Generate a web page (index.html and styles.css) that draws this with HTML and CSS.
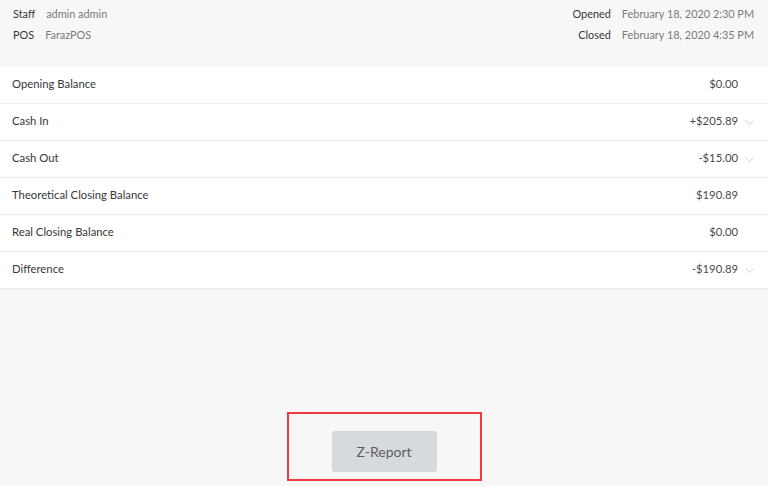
FILE: index.html
```html
<!DOCTYPE html>
<html>
<head>
<meta charset="utf-8">
<link rel="stylesheet" href="styles.css">
</head>
<body>
<div class="page">
  <header class="info">
    <div class="info-col">
      <div class="info-row"><span class="lbl">Staff</span><span class="val">admin admin</span></div>
      <div class="info-row"><span class="lbl">POS</span><span class="val">FarazPOS</span></div>
    </div>
    <div class="info-col right">
      <div class="info-row"><span class="lbl">Opened</span><span class="val">February 18, 2020 2:30 PM</span></div>
      <div class="info-row"><span class="lbl">Closed</span><span class="val">February 18, 2020 4:35 PM</span></div>
    </div>
  </header>
  <section class="list">
    <div class="row"><span class="name">Opening Balance</span><span class="amt">$0.00</span><span class="chev"></span></div>
    <div class="row"><span class="name">Cash In</span><span class="amt">+$205.89</span><span class="chev"><svg width="9" height="5" viewBox="0 0 9 5"><path d="M0.5 0.5 L4.5 4.5 L8.5 0.5" fill="none" stroke="#d2d2d2" stroke-width="1"/></svg></span></div>
    <div class="row"><span class="name">Cash Out</span><span class="amt">-$15.00</span><span class="chev"><svg width="9" height="5" viewBox="0 0 9 5"><path d="M0.5 0.5 L4.5 4.5 L8.5 0.5" fill="none" stroke="#d2d2d2" stroke-width="1"/></svg></span></div>
    <div class="row"><span class="name">Theoretical Closing Balance</span><span class="amt">$190.89</span><span class="chev"></span></div>
    <div class="row"><span class="name">Real Closing Balance</span><span class="amt">$0.00</span><span class="chev"></span></div>
    <div class="row"><span class="name">Difference</span><span class="amt">-$190.89</span><span class="chev"><svg width="9" height="5" viewBox="0 0 9 5"><path d="M0.5 0.5 L4.5 4.5 L8.5 0.5" fill="none" stroke="#d2d2d2" stroke-width="1"/></svg></span></div>
  </section>
  <div class="actions">
    <div class="highlight">
      <button class="zbtn">Z-Report</button>
    </div>
  </div>
</div>
</body>
</html>
```
FILE: styles.css
```css
html, body {
  margin: 0;
  padding: 0;
  background: #f7f7f7;
  font-family: Lato, "Open Sans", sans-serif;
}
.page {
  width: 768px;
  height: 486px;
  display: flex;
  flex-direction: column;
}
.info {
  height: 67px;
  box-sizing: border-box;
  padding: 3px 14px 0 13px;
  display: flex;
  justify-content: space-between;
  font-size: 10.9px;
}
.info-row {
  height: 21px;
  display: flex;
  align-items: center;
  gap: 11px;
}
.info-col.right .info-row {
  justify-content: flex-end;
}
.lbl { color: #383838; }
.val { color: #7a7a7a; }
.list {
  background: #fff;
}
.row {
  height: 36px;
  box-sizing: border-box;
  padding: 0 14px 3px 12px;
  border-bottom: 1px solid #ececec;
  display: flex;
  align-items: center;
  font-size: 11.3px;
  color: #383838;
}
.row + .row { height: 37px; }
.row:first-child { height: 37px; }
.row .name { flex: 1; }
.row .amt { color: #4a4a4a; }
.chev {
  width: 9px;
  margin-left: 7px;
  padding-top: 3px;
  display: flex;
  align-items: center;
}
.actions {
  display: flex;
  justify-content: center;
  padding-top: 123px;
}
.highlight {
  width: 195px;
  height: 69px;
  box-sizing: border-box;
  border: 2px solid #ef3b3f;
  display: flex;
  justify-content: center;
  align-items: flex-start;
  padding-top: 17px;
}
.zbtn {
  width: 105px;
  height: 41px;
  border: none;
  border-radius: 3px;
  background: #d6d9dd;
  color: #606060;
  font-family: Lato, "Open Sans", sans-serif;
  font-size: 14px;
  padding: 0;
}
```
